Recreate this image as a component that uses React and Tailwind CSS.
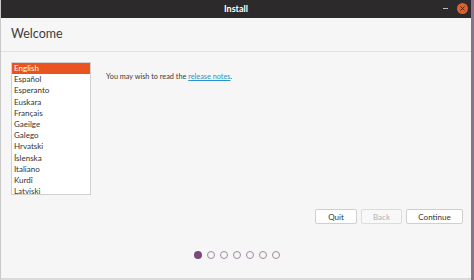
import React from "react";

const languages = [
  "English",
  "Español",
  "Esperanto",
  "Euskara",
  "Français",
  "Gaeilge",
  "Galego",
  "Hrvatski",
  "Íslenska",
  "Italiano",
  "Kurdî",
  "Latviski",
];

const App = () => {
  const selected = 0;

  return (
    <div className="w-[474px] h-[280px] flex bg-[#8c738d] font-['Lato',sans-serif]">
      {/* Window */}
      <div className="w-[471px] h-[280px] flex flex-col bg-[#f6f6f6] border-l border-b-2 border-l-[#c8c8c8] border-b-[#dadada]">
        {/* Title bar */}
        <div className="h-[18px] bg-[#2c2a2a] flex items-center relative">
          <span className="flex-1 text-center text-white text-[9px] font-bold">Install</span>
          <div className="absolute right-[3px] top-[3px] flex items-center gap-[9px]">
            <span className="w-[5px] h-[1.5px] bg-[#bdbdbd]" />
            <span className="w-[11px] h-[11px] rounded-full bg-[#e25f2a] flex items-center justify-center">
              <svg width="5" height="5" viewBox="0 0 5 5">
                <path d="M0.5 0.5L4.5 4.5M4.5 0.5L0.5 4.5" stroke="#3a2a22" strokeWidth="1" />
              </svg>
            </span>
          </div>
        </div>

        {/* Header */}
        <div className="h-[34px] border-b border-[#e2e2e2] flex items-center px-[10px]">
          <h1 className="text-[12.5px] text-[#3c3c3c] leading-none">Welcome</h1>
        </div>

        {/* Content */}
        <div className="flex-1 flex flex-col pl-[10px] pr-[8px] pt-[10px]">
          <div className="flex gap-[15px]">
            {/* Language list */}
            <div className="w-[80px] h-[133px] bg-white border border-[#d0d0d0] overflow-hidden">
              {languages.map((lang, i) => (
                <div
                  key={lang}
                  className={
                    i === selected
                      ? "h-[11.2px] bg-[#e95420] text-white text-[8px] leading-[11.2px] px-[2px]"
                      : "h-[11.2px] text-[#333] text-[8px] leading-[11.2px] px-[2px]"
                  }
                >
                  {lang}
                </div>
              ))}
            </div>

            {/* Release notes */}
            <p className="text-[7.3px] text-[#3c3c3c] mt-[10px]">
              You may wish to read the{" "}
              <a href="#" className="text-[#2a93cc] underline">
                release notes
              </a>
              .
            </p>
          </div>

          {/* Buttons */}
          <div className="flex justify-end gap-[4px] mt-[14px]">
            <button className="w-[42px] h-[15px] bg-white border border-[#cfcfcf] rounded-[2px] text-[8px] text-[#333]">
              Quit
            </button>
            <button className="w-[41px] h-[15px] bg-[#f8f8f8] border border-[#dcdcdc] rounded-[2px] text-[8px] text-[#b0b0b0]">
              Back
            </button>
            <button className="w-[57px] h-[15px] bg-white border border-[#cfcfcf] rounded-[2px] text-[8px] text-[#333]">
              Continue
            </button>
          </div>

          {/* Progress dots */}
          <div className="flex justify-center gap-[5px] mt-[27px]">
            {[0, 1, 2, 3, 4, 5, 6].map((i) => (
              <span
                key={i}
                className={
                  i === 0
                    ? "w-[8px] h-[8px] rounded-full bg-[#7b4a7c]"
                    : "w-[8px] h-[8px] rounded-full border border-[#a08aa2]"
                }
              />
            ))}
          </div>
        </div>
      </div>
    </div>
  );
};

export default App;
